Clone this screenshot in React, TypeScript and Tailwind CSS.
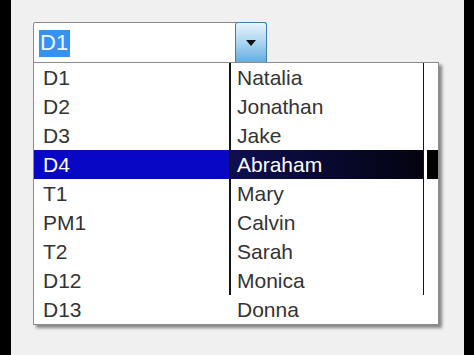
import { useState } from "react";

// Classic WinForms-style multi-column combo: selected text up top, open drop list below.

const ROWS: [string, string][] = [
  ["D1", "Natalia"],
  ["D2", "Jonathan"],
  ["D3", "Jake"],
  ["D4", "Abraham"],
  ["T1", "Mary"],
  ["PM1", "Calvin"],
  ["T2", "Sarah"],
  ["D12", "Monica"],
  ["D13", "Donna"],
];

export default function App() {
  const [active] = useState(3);

  return (
    <div
      className="flex h-[355px] w-[474px] bg-black"
      style={{ fontFamily: '"Liberation Sans", Arial, sans-serif' }}
    >
      <div className="ml-[11px] h-full w-[453px] bg-[#f0f0f0] pl-[22px] pt-[22px]">
        {/* combo box */}
        <div className="relative z-0 flex h-[42px] w-[234px] rounded-[2px] border border-[#8a8a8a] bg-white">
          <div className="flex flex-1 items-center pl-[5px]">
            <span className="flex h-[27px] items-center bg-[#3592f0] pl-[1px] pr-[2px] text-[22px] leading-none text-[#eef6ff]">
              D1
            </span>
          </div>
          <div className="-my-px -mr-px flex w-[32px] items-center justify-center rounded-[3px] border border-[#3c7fb1] bg-gradient-to-b from-[#e6f3fb] via-[#a9d5f1] to-[#5fabe0]">
            <svg width="10" height="6" viewBox="0 0 10 6">
              <path d="M0 0h10L5 6z" fill="#111" />
            </svg>
          </div>
        </div>

        {/* drop list */}
        <div className="relative z-10 -mt-[2px] w-[406px] border border-[#8c8c8c] bg-white shadow-[3px_3px_3px_rgba(0,0,0,0.45)]">
          {ROWS.map(([code, name], i) => {
            const sel = i === active;
            const grid = i < ROWS.length - 1;
            return (
              <div key={code} className="flex h-[29px] text-[21px] leading-none">
                <div
                  className={`flex w-[197px] items-center pl-[9px] ${grid ? "border-r-2 border-[#151515]" : "border-r-2 border-transparent"} ${sel ? "bg-[#0808c4] text-white" : "text-[#333333]"}`}
                >
                  {code}
                </div>
                <div
                  className={`flex w-[193px] items-center pl-[6px] ${grid ? "border-r border-[#151515]" : "border-r border-transparent"} ${sel ? "bg-gradient-to-r from-[#0e0e52] to-[#040410] text-white" : "text-[#333333]"}`}
                >
                  {name}
                </div>
                <div className="flex flex-1 pl-[3px]">
                  {sel && <div className="h-full w-full bg-black" />}
                </div>
              </div>
            );
          })}
        </div>
      </div>
    </div>
  );
}
